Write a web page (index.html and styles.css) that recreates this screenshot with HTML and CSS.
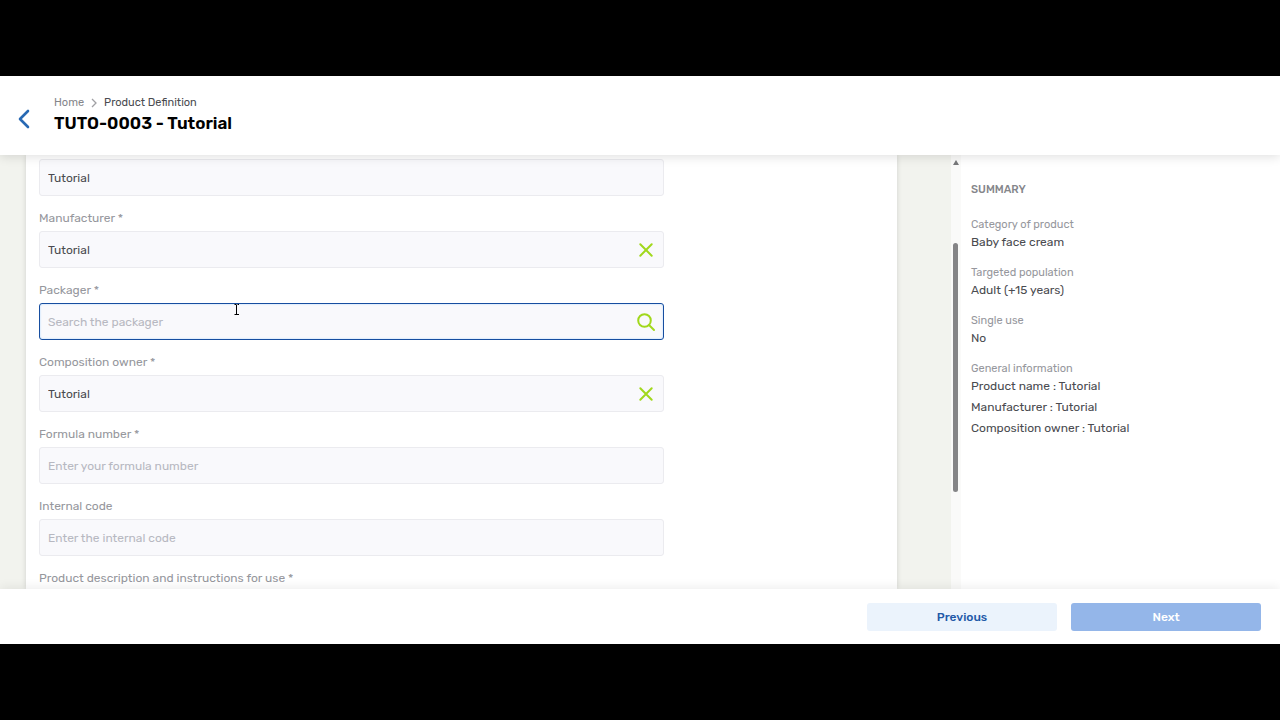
FILE: index.html
```html
<!DOCTYPE html>
<html lang="en">
<head>
    <meta charset="UTF-8">
    <meta name="viewport" content="width=device-width, initial-scale=1.0">
    <title>TUTO-0003 - Tutorial</title>
    <link rel="stylesheet" href="styles.css">
</head>
<body>
    <div class="app">
        <header class="header">
            <a class="back" href="#" aria-label="Back">
                <svg width="12" height="20" viewBox="0 0 12 20"><path d="M10 2L2 10l8 8"/></svg>
            </a>
            <div>
                <nav class="breadcrumb">
                    <a href="#">Home</a>
                    <svg width="6" height="10" viewBox="0 0 6 10"><path d="M1 1l4 4-4 4"/></svg>
                    <span>Product Definition</span>
                </nav>
                <h1>TUTO-0003 - Tutorial</h1>
            </div>
        </header>
        <main class="content">
            <form class="card">
                <div class="field">
                    <input type="text" value="Tutorial" aria-label="Product name">
                </div>
                <label for="manufacturer">Manufacturer *</label>
                <div class="field">
                    <input type="text" id="manufacturer" value="Tutorial">
                    <button type="button" aria-label="Clear manufacturer">
                        <svg width="20" height="20" viewBox="0 0 20 20"><path d="M4.3 4.3l11.4 11.4M15.7 4.3L4.3 15.7"/></svg>
                    </button>
                </div>
                <label for="packager">Packager *</label>
                <div class="field active">
                    <input type="text" id="packager" placeholder="Search the packager">
                    <button type="button" aria-label="Search packager">
                        <svg width="20" height="20" viewBox="0 0 20 20"><circle cx="8.5" cy="8.5" r="6.3"/><path d="M13 13l5 5"/></svg>
                    </button>
                    <svg class="cursor" width="6" height="12" viewBox="0 0 6 12"><path d="M.5 .5h1.5M3.5 .5h1.5M2.5 .5v10M.5 10.5h4.5"/></svg>
                </div>
                <label for="owner">Composition owner *</label>
                <div class="field">
                    <input type="text" id="owner" value="Tutorial">
                    <button type="button" aria-label="Clear composition owner">
                        <svg width="20" height="20" viewBox="0 0 20 20"><path d="M4.3 4.3l11.4 11.4M15.7 4.3L4.3 15.7"/></svg>
                    </button>
                </div>
                <label for="formula">Formula number *</label>
                <div class="field">
                    <input type="text" id="formula" placeholder="Enter your formula number">
                </div>
                <label for="code">Internal code</label>
                <div class="field">
                    <input type="text" id="code" placeholder="Enter the internal code">
                </div>
                <label for="description">Product description and instructions for use *</label>
                <textarea id="description"></textarea>
            </form>
            <div class="scrollbar">
                <svg width="6" height="5" viewBox="0 0 6 5"><path d="M3 0l3 5H0z"/></svg>
                <div class="thumb"></div>
            </div>
            <aside class="summary">
                <h2>SUMMARY</h2>
                <dl>
                    <dt>Category of product</dt>
                    <dd>Baby face cream</dd>
                    <dt>Targeted population</dt>
                    <dd>Adult (+15 years)</dd>
                    <dt>Single use</dt>
                    <dd>No</dd>
                    <dt>General information</dt>
                    <dd>Product name : Tutorial</dd>
                    <dd>Manufacturer : Tutorial</dd>
                    <dd>Composition owner : Tutorial</dd>
                </dl>
            </aside>
        </main>
        <footer class="footer">
            <button type="button" class="previous">Previous</button>
            <button type="button" class="next">Next</button>
        </footer>
    </div>
</body>
</html>
```

FILE: styles.css
```css
* {
    box-sizing: border-box;
}

body {
    margin: 0;
    height: 100vh;
    padding: 76px 0;
    background-color: #000000;
    font-family: Rubik, Roboto, Arial, sans-serif;
    font-size: 12px;
    color: #4a4b50;
}

svg {
    display: block;
    fill: none;
}

input, button, textarea {
    font-family: inherit;
    font-size: inherit;
}

.app {
    display: flex;
    flex-direction: column;
    height: 100%;
    background-color: #ffffff;
}

.header {
    display: flex;
    align-items: center;
    gap: 24px;
    flex: 0 0 79px;
    padding: 0 18px 4px;
    background-color: #ffffff;
    box-shadow: 0 2px 10px rgba(0, 0, 0, 0.12);
    z-index: 1;
}

.back {
    padding-top: 10px;
}

.back path {
    stroke: #2869b3;
    stroke-width: 2.6;
    stroke-linecap: round;
    stroke-linejoin: round;
}

.breadcrumb {
    display: flex;
    align-items: center;
    gap: 7px;
    font-size: 11px;
    line-height: 16px;
}

.breadcrumb a {
    color: #85868b;
    text-decoration: none;
}

.breadcrumb path {
    stroke: #a0a0a4;
    stroke-width: 1.3;
}

h1 {
    margin: 2px 0 0;
    font-size: 17px;
    line-height: 20px;
    font-weight: 600;
    color: #000000;
}

.content {
    display: flex;
    flex: 1;
    min-height: 0;
    overflow: hidden;
    background-color: #f2f3ee;
}

.card {
    flex: 1;
    margin: 0 54px 0 26px;
    padding: 4px 13px 0;
    background-color: #ffffff;
    box-shadow: 0 0 5px rgba(0, 0, 0, 0.14);
}

.card label {
    display: block;
    width: fit-content;
    margin: 14px 0 5px;
    line-height: 16px;
    color: #96979d;
}

.field {
    position: relative;
    display: flex;
    align-items: center;
    width: 74%;
    height: 37px;
    border: 1px solid #ebebef;
    border-radius: 3px;
    background-color: #f9f9fc;
}

.field.active {
    border-color: #174ea0;
    box-shadow: inset 0 0 2px #a6d3ff;
}

.field input {
    flex: 1;
    min-width: 0;
    height: 100%;
    padding: 0 8px;
    border: none;
    outline: none;
    background: none;
    color: #4a4b50;
}

.field input::placeholder {
    color: #b7b8c1;
}

.field button {
    padding: 0;
    margin-right: 7px;
    border: none;
    background: none;
    cursor: pointer;
}

.field button svg {
    stroke: #a1d81c;
    stroke-width: 2;
    stroke-linecap: round;
}

.cursor {
    position: absolute;
    left: 194px;
    top: 0;
    stroke: #000000;
    stroke-width: 1;
}

textarea {
    width: 74%;
    border: 1px solid #ebebef;
}

.scrollbar {
    flex: 0 0 9px;
    padding: 5px 2px 0;
    background-color: #fafaf9;
}

.scrollbar svg {
    fill: #77787a;
}

.thumb {
    width: 5px;
    height: 58%;
    margin-top: 78px;
    border-radius: 3px;
    background-color: #858587;
}

.summary {
    flex: 0 0 319px;
    padding: 26px 10px 0;
    background-color: #ffffff;
}

h2 {
    margin: 0 0 19px;
    font-size: 11px;
    line-height: 18px;
    font-weight: 500;
    color: #85868b;
}

dl {
    margin: 0;
}

dt {
    font-size: 11px;
    line-height: 14px;
    color: #96979d;
}

dd {
    margin: 0;
    line-height: 21px;
}

dd + dt {
    margin-top: 13px;
}

.footer {
    display: flex;
    justify-content: flex-end;
    gap: 14px;
    flex: 0 0 55px;
    padding: 14px 19px 13px;
    background-color: #ffffff;
    box-shadow: 0 -2px 10px rgba(0, 0, 0, 0.07);
    z-index: 1;
}

.footer button {
    width: 190px;
    border: none;
    border-radius: 3px;
    font-weight: 500;
    cursor: pointer;
}

.previous {
    background-color: #ebf3fc;
    color: #2259a8;
}

.next {
    background-color: #94b6e9;
    color: #ffffff;
}
```
